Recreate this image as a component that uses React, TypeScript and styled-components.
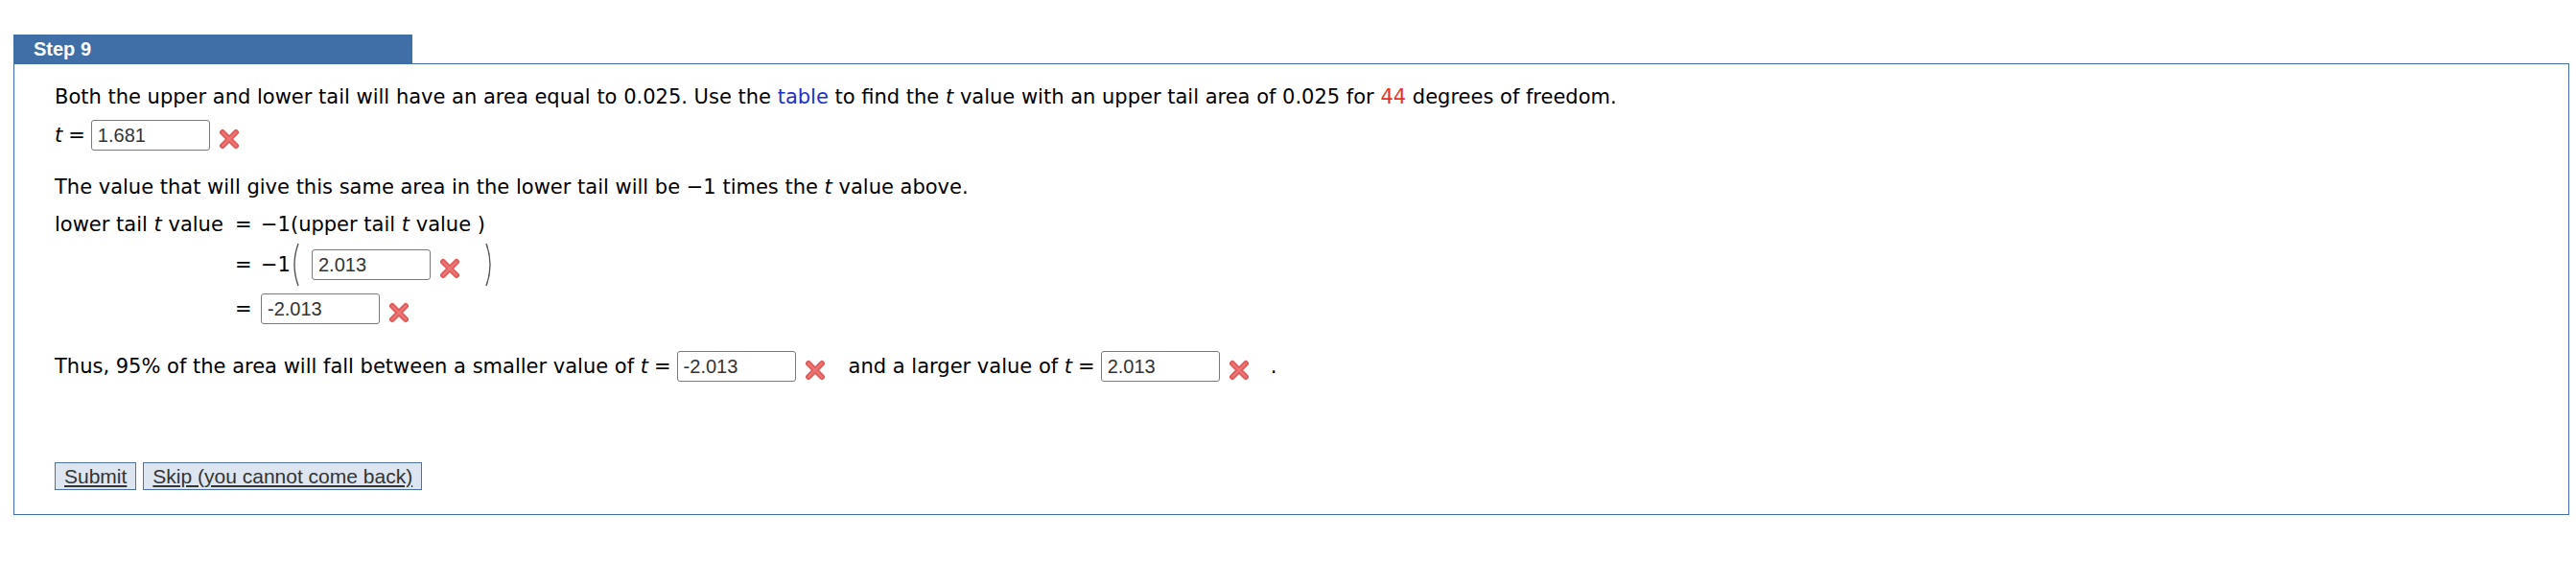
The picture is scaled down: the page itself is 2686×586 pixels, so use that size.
import styled, { createGlobalStyle } from "styled-components";

const GlobalStyle = createGlobalStyle`
  html, body {
    margin: 0;
    padding: 0;
    background: #ffffff;
  }
  body {
    font-family: "DejaVu Sans", Verdana, sans-serif;
    font-size: 21px;
    color: #000000;
  }
`;

function WrongMark() {
  return (
    <StMark viewBox="0 0 22 22" aria-label="incorrect">
      <path
        d="M4 4 L18 18 M18 4 L4 18"
        stroke="#e35a5a"
        strokeWidth="6"
        strokeLinecap="round"
        fill="none"
      />
      <path
        d="M4 4 L18 18 M18 4 L4 18"
        stroke="#f39090"
        strokeWidth="2"
        strokeLinecap="round"
        fill="none"
        opacity="0.55"
      />
    </StMark>
  );
}

function Paren({ side }: { side: "left" | "right" }) {
  const d = side === "left" ? "M8 1 Q0 23 8 45" : "M1 1 Q9 23 1 45";
  return (
    <StParen viewBox="0 0 9 46">
      <path d={d} stroke="#555" strokeWidth="1.4" fill="none" />
    </StParen>
  );
}

export default function App() {
  return (
    <>
      <GlobalStyle />
      <StPage>
        <StHeader>Step 9</StHeader>
        <StBox>
          <StLine>
            Both the upper and lower tail will have an area equal to 0.025. Use
            the <StLink>table</StLink> to find the <i>t</i> value with an upper
            tail area of 0.025 for <StRed>44</StRed> degrees of freedom.
          </StLine>

          <StRow $top={12}>
            <i>t</i>
            <StEq>=</StEq>
            <StInput value="1.681" readOnly />
            <WrongMark />
          </StRow>

          <StLine $top={26}>
            The value that will give this same area in the lower tail will be −1
            times the <i>t</i> value above.
          </StLine>

          <StEquation>
            <StLabel>
              lower tail <i>t</i> value
            </StLabel>
            <StEqCell>=</StEqCell>
            <StExpr>
              <span>
                −1(upper tail <i>t</i> value )
              </span>
            </StExpr>

            <span />
            <StEqCell>=</StEqCell>
            <StExpr $height={46}>
              <span>−1</span>
              <Paren side="left" />
              <StInput value="2.013" readOnly $gap={13} />
              <WrongMark />
              <StSpacer />
              <Paren side="right" />
            </StExpr>

            <span />
            <StEqCell>=</StEqCell>
            <StExpr $height={32}>
              <StInput value="-2.013" readOnly />
              <WrongMark />
            </StExpr>
          </StEquation>

          <StRow $top={28}>
            <span>
              Thus, 95% of the area will fall between a smaller value of <i>t</i>
            </span>
            <StEq>=</StEq>
            <StInput value="-2.013" readOnly />
            <WrongMark />
            <StAfter>
              and a larger value of <i>t</i>
            </StAfter>
            <StEq>=</StEq>
            <StInput value="2.013" readOnly />
            <WrongMark />
            <StDot>.</StDot>
          </StRow>

          <StButtons>
            <StButton type="button">Submit</StButton>
            <StButton type="button">Skip (you cannot come back)</StButton>
          </StButtons>
        </StBox>
      </StPage>
    </>
  );
}

const StPage = styled.div`
  padding: 36px 7px 49px 14px;
`;

const StHeader = styled.div`
  width: 395px;
  height: 30px;
  padding-left: 21px;
  background-color: #3f6fa6;
  color: #ffffff;
  font-family: "Liberation Sans", Arial, sans-serif;
  font-weight: bold;
  font-size: 20px;
  line-height: 30px;
`;

const StBox = styled.div`
  border: 1.5px solid #3f6fa6;
  padding: 22px 43px 25px 42px;
  display: flex;
  flex-direction: column;
  align-items: flex-start;
`;

const StLine = styled.div<{ $top?: number }>`
  margin-top: ${(p) => p.$top ?? 0}px;
  line-height: 24px;
  white-space: nowrap;
`;

const StLink = styled.span`
  color: #1d2fcc;
`;

const StRed = styled.span`
  color: #e8322c;
`;

const StRow = styled.div<{ $top?: number }>`
  margin-top: ${(p) => p.$top ?? 0}px;
  display: flex;
  align-items: center;
  height: 32px;
  white-space: pre;
`;

const StEq = styled.span`
  margin: 0 6px 0 6px;
`;

const StInput = styled.input<{ $gap?: number }>`
  box-sizing: border-box;
  width: 124px;
  height: 32px;
  margin-left: ${(p) => p.$gap ?? 0}px;
  padding: 0 6px;
  border: 1px solid #7a7a7a;
  border-radius: 3px;
  font-family: "Liberation Sans", Arial, sans-serif;
  font-size: 20px;
  color: #333333;
  background: #ffffff;
  outline: none;
`;

const StMark = styled.svg`
  width: 22px;
  height: 22px;
  margin-left: 9px;
  margin-top: 8px;
  flex-shrink: 0;
`;

const StParen = styled.svg`
  width: 9px;
  height: 46px;
  flex-shrink: 0;
`;

const StSpacer = styled.span`
  width: 26px;
`;

const StAfter = styled.span`
  margin-left: 24px;
`;

const StDot = styled.span`
  margin-left: 22px;
`;

const StEquation = styled.div`
  margin-top: 15px;
  display: grid;
  grid-template-columns: 188px 27px auto;
  row-gap: 7px;
  align-items: center;
  white-space: nowrap;
`;

const StLabel = styled.span`
  line-height: 24px;
`;

const StEqCell = styled.span`
  line-height: 24px;
`;

const StExpr = styled.span<{ $height?: number }>`
  display: flex;
  align-items: center;
  height: ${(p) => p.$height ?? 24}px;
  line-height: 24px;
`;

const StButtons = styled.div`
  margin-top: 84px;
  display: flex;
  gap: 7px;
`;

const StButton = styled.button`
  height: 29px;
  padding: 0 9px;
  border: 1.5px solid #4a72a6;
  background-color: #dde6f0;
  color: #333333;
  font-family: "Liberation Sans", Arial, sans-serif;
  font-size: 21px;
  text-decoration: underline;
  cursor: pointer;
`;
